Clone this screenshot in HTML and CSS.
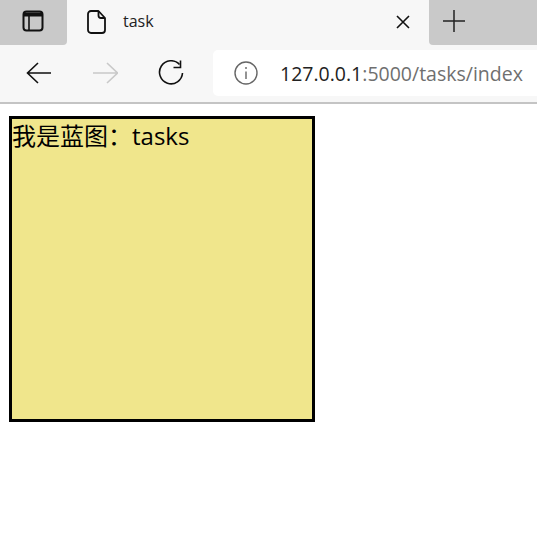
FILE: index.html
```html
<!DOCTYPE html>
<html lang="zh">
<head>
<meta charset="utf-8">
<title>task</title>
<link rel="stylesheet" href="styles.css">
</head>
<body>
<header class="chrome">
  <div class="tabstrip">
    <div class="strip-left">
      <svg class="ic" width="24" height="24" viewBox="0 0 24 24" fill="none" stroke="#111" stroke-width="2"><rect x="2.500" y="2.500" width="19" height="19" rx="3"/><path d="M3 5.500h18" stroke-width="4"/><path d="M8 7v14" stroke-width="1.600"/></svg>
    </div>
    <div class="tab">
      <svg class="doc" width="20" height="26" viewBox="0 0 20 26" fill="none" stroke="#111" stroke-width="1.800" stroke-linejoin="round"><path d="M4 2h7.500l6.500 7v12a3 3 0 0 1-3 3H4a3 3 0 0 1-3-3V5a3 3 0 0 1 3-3z"/><path d="M11.500 2v4.500A2.500 2.500 0 0 0 14 9h4"/></svg>
      <span class="tab-title">task</span>
      <svg class="close" width="14" height="14" viewBox="0 0 14 14" stroke="#111" stroke-width="1.600"><path d="M1 1l12 12M13 1L1 13"/></svg>
    </div>
    <div class="strip-right">
      <svg width="22" height="22" viewBox="0 0 22 22" stroke="#222" stroke-width="1.500"><path d="M11 0v22M0 11h22"/></svg>
    </div>
  </div>
  <div class="toolbar">
    <svg class="btn" width="26" height="22" viewBox="0 0 26 22" fill="none" stroke="#111" stroke-width="1.600"><path d="M25 11H1.500M12 1L1.500 11 12 21"/></svg>
    <svg class="btn fwd" width="26" height="22" viewBox="0 0 26 22" fill="none" stroke="#c9c9c9" stroke-width="1.600"><path d="M1 11h24.500M15 1l10.500 10L15 21"/></svg>
    <svg class="btn reload" width="26" height="26" viewBox="0 0 26 26" fill="none" stroke="#111" stroke-width="1.600"><path d="M21.500 4.500A11.500 11.500 0 1 0 24.500 13"/><path d="M22.500 .5v7h-7"/></svg>
    <div class="address">
      <svg class="info" width="24" height="24" viewBox="0 0 24 24" fill="none" stroke="#666" stroke-width="1.400"><circle cx="12" cy="12" r="11"/><path d="M12 10.500V18M12 6v2"/></svg>
      <span class="url"><span class="host">127.0.0.1</span>:5000/tasks/index</span>
    </div>
  </div>
</header>
<main class="page">
  <div class="box">我是蓝图：tasks</div>
</main>
</body>
</html>
```
FILE: styles.css
```css
* { box-sizing: border-box; }
html, body { margin: 0; height: 100%; overflow: hidden; background: #fff; }
body { font-family: "Open Sans", "Noto Sans CJK SC", sans-serif; }
.chrome { display: flex; flex-direction: column; }
.tabstrip { display: flex; height: 45px; background: #f7f7f7; }
.strip-left { width: 67px; display: flex; align-items: center; padding: 0 0 3px 21px; background: #c9c9c9; border-bottom-right-radius: 4px; }
.tab { width: 362px; background: #f7f7f7; display: flex; align-items: center; padding: 0 19px 3px 20px; }
.doc { margin-top: 1px; }
.tab-title { margin-left: 16px; font-size: 16px; color: #222; flex: 1; }
.close { margin-top: 2px; }
.strip-right { flex: 1; display: flex; align-items: center; padding: 0 0 3px 14px; background: #c9c9c9; border-bottom-left-radius: 4px; }
.toolbar { height: 59px; background: #f7f7f7; border-bottom: 2px solid #c4c4c4; display: flex; align-items: center; padding-left: 26px; padding-bottom: 1px; }
.btn { flex: none; }
.fwd { margin-left: 40px; }
.reload { margin-left: 40px; }
.address { margin-left: 29px; flex: 1; height: 46px; background: #fff; border-radius: 5px 0 0 5px; display: flex; align-items: center; padding-left: 21px; }
.url { margin-left: 22px; font-size: 19.500px; color: #6f6f6f; white-space: nowrap; }
.host { color: #222; }
.page { padding: 12px 9px; }
.box { width: 306px; height: 306px; border: 3px solid #000; background: #f0e68c; font-size: 24px; line-height: 33px; color: #000; }
```
